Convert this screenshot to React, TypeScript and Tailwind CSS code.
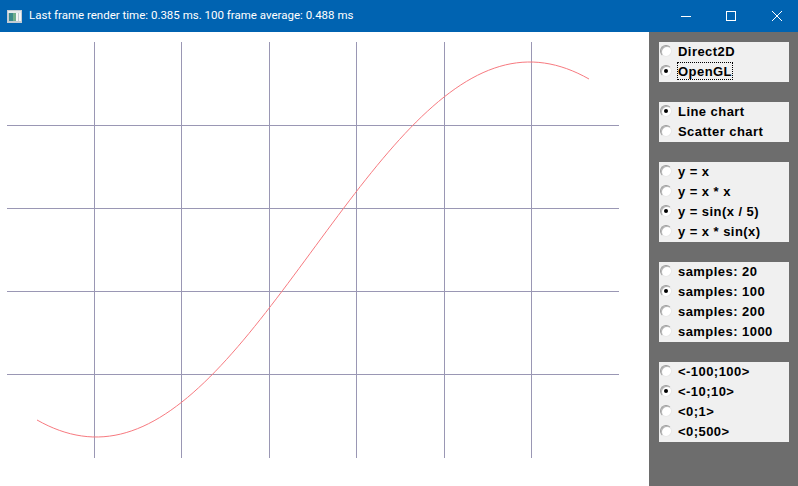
const sans = "font-['Liberation_Sans',Arial,sans-serif]";

type Group = { options: string[]; selected: number; focused?: boolean };

const groups: Group[] = [
  { options: ["Direct2D", "OpenGL"], selected: 1, focused: true },
  { options: ["Line chart", "Scatter chart"], selected: 0 },
  { options: ["y = x", "y = x * x", "y = sin(x / 5)", "y = x * sin(x)"], selected: 2 },
  { options: ["samples: 20", "samples: 100", "samples: 200", "samples: 1000"], selected: 1 },
  { options: ["<-100;100>", "<-10;10>", "<0;1>", "<0;500>"], selected: 1 },
];

// y = sin(x / 5) over <-10;10>, 100 samples
const curve = Array.from({ length: 100 }, (_, i) => {
  const x = -10 + (20 * i) / 99;
  return `${(313 + x * 27.6).toFixed(2)},${(249.5 - 32 - Math.sin(x / 5) * 187.5).toFixed(2)}`;
}).join(" ");

const Radio = ({ checked }: { checked: boolean }) => (
  <span className="mt-[3px] flex h-[12px] w-[12px] shrink-0 items-center justify-center rounded-full border border-t-[#9a9a9a] border-l-[#9a9a9a] border-r-[#e8e8e8] border-b-[#e8e8e8] bg-white shadow-[inset_1px_1px_0_#b4b4b4]">
    {checked && <span className="h-[4px] w-[4px] rounded-full bg-black" />}
  </span>
);

const RadioGroup = ({ options, selected, focused }: Group) => (
  <div className="flex w-[130px] flex-col bg-[#f0f0f0]">
    {options.map((label, i) => (
      <label key={label} className="flex h-5 items-start pl-[1px]">
        <Radio checked={i === selected} />
        <span
          className={`ml-[5px] flex h-[18px] items-center border border-dotted text-[13px] font-bold leading-none tracking-[0.45px] text-black ${sans} ${
            focused && i === selected ? "border-black" : "border-transparent"
          }`}
        >
          {label}
        </span>
      </label>
    ))}
  </div>
);

export default function App() {
  return (
    <div className="flex h-[486px] w-[798px] flex-col overflow-hidden bg-white">
      <header className="flex h-8 shrink-0 items-center bg-[#0063b1] text-white">
        <svg width="15" height="13" viewBox="0 0 15 13" className="ml-[7px]">
          <rect x="0" y="0" width="15" height="13" fill="#c3ccd3" />
          <rect x="1" y="1" width="13" height="2" fill="#e6ebee" />
          <rect x="2" y="3" width="4" height="8" fill="#3b8a8c" />
          <rect x="6" y="3" width="3" height="8" fill="#6fae8c" />
          <rect x="9" y="3" width="2" height="8" fill="#f4f6f6" />
          <rect x="12" y="3" width="2" height="8" fill="#f4f6f6" />
        </svg>
        <span className="ml-[7px] text-[11.5px] font-['Roboto',sans-serif]">
          Last frame render time: 0.385 ms. 100 frame average: 0.488 ms
        </span>
        <div className="ml-auto flex items-center gap-[36px] pr-[16px]">
          <button className="mr-[-1px]">
            <svg width="10" height="10" viewBox="0 0 10 10" className="block"><path d="M0 5.5H10" stroke="#fff" /></svg>
          </button>
          <button>
            <svg width="10" height="10" viewBox="0 0 10 10" className="block"><rect x=".5" y=".5" width="9" height="9" fill="none" stroke="#fff" /></svg>
          </button>
          <button>
            <svg width="10" height="10" viewBox="0 0 10 10" className="block"><path d="M0 0L10 10M10 0L0 10" stroke="#fff" /></svg>
          </button>
        </div>
      </header>
      <div className="flex min-h-0 flex-1">
        <main className="w-[649px] shrink-0">
          <svg width="649" height="454" viewBox="0 0 649 454">
            {[94.5, 181.5, 269.5, 356.5, 444.5, 531.5].map((x) => (
              <line key={x} x1={x} x2={x} y1="10" y2="426" stroke="#9a97b4" />
            ))}
            {[93.5, 176.5, 259.5, 342.5].map((y) => (
              <line key={y} x1="7" x2="619" y1={y} y2={y} stroke="#9a97b4" />
            ))}
            <polyline points={curve} fill="none" stroke="#f77a80" strokeWidth="1" />
          </svg>
        </main>
        <aside className="flex flex-1 flex-col gap-5 bg-[#6d6d6d] pl-[10px] pt-[10px]">
          {groups.map((g) => (
            <RadioGroup key={g.options[0]} {...g} />
          ))}
        </aside>
      </div>
    </div>
  );
}
